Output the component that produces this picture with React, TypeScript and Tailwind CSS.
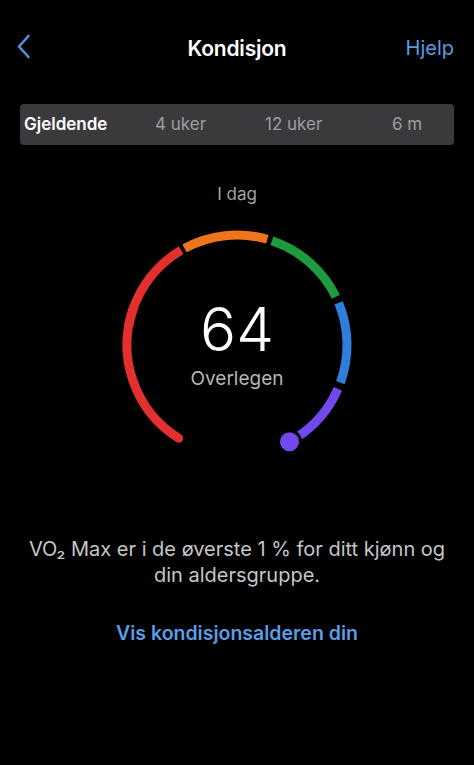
import React from 'react';

const CX = 125;
const CY = 125;
const R = 110;

// angles are degrees, clockwise from +x (screen coords)
const pt = (a: number) => {
    const rad = (a * Math.PI) / 180;
    return [CX + R * Math.cos(rad), CY + R * Math.sin(rad)];
};

const arc = (a1: number, a2: number) => {
    const [x1, y1] = pt(a1);
    const [x2, y2] = pt(a2);
    const large = a2 - a1 > 180 ? 1 : 0;
    return `M ${x1.toFixed(2)} ${y1.toFixed(2)} A ${R} ${R} 0 ${large} 1 ${x2.toFixed(2)} ${y2.toFixed(2)}`;
};

const SEGMENTS = [
    { from: 190, to: 239.5, color: '#e3302e' },
    { from: 241.5, to: 286, color: '#ee751c' },
    { from: 288.5, to: 334, color: '#1e9b3e' },
    { from: 337.5, to: 380, color: '#2e7fdc' },
    { from: 383.5, to: 418, color: '#7349ef' },
];

const TABS = ['Gjeldende', '4 uker', '12 uker', '6 m'];

const Gauge: React.FC = () => {
    const [dx, dy] = pt(61.5);
    return (
        <svg width="250" height="250" viewBox="0 0 250 250">
            <path d={arc(122, 200)} stroke="#e3302e" strokeWidth="9" fill="none" strokeLinecap="round" />
            {SEGMENTS.map((s, i) => (
                <path key={i} d={arc(s.from, s.to)} stroke={s.color} strokeWidth="9" fill="none" />
            ))}
            <circle cx={dx} cy={dy} r="11" fill="#7349ef" stroke="#000" strokeWidth="3" />
        </svg>
    );
};

const App: React.FC = () => {
    return (
        <div className="w-[474px] h-[765px] bg-black text-white overflow-hidden" style={{ fontFamily: 'Inter, "Liberation Sans", sans-serif' }}>
            {/* Nav bar */}
            <div className="relative h-[40px] mt-[28px] flex items-center justify-center">
                <svg className="absolute left-[12px] top-[4px]" width="24" height="30" viewBox="0 0 24 30">
                    <path d="M16.5 4 L7 14.5 L16.5 25" stroke="#4f93e0" strokeWidth="2.6" fill="none" strokeLinecap="round" strokeLinejoin="round" />
                </svg>
                <span className="text-[21px] font-semibold tracking-[-0.2px] mt-[2px]">Kondisjon</span>
                <span className="absolute right-[20px] top-[5px] text-[20px] text-[#5b9ae2]">Hjelp</span>
            </div>

            {/* Segmented control */}
            <div className="mx-[20px] mt-[36px] h-[41px] rounded-[4px] bg-[#3a3a3c] flex items-center text-[17px]">
                <span className="w-[118px] pl-[4px] font-semibold text-white">{TABS[0]}</span>
                <span className="w-[110px] pl-[17px] text-[#9d9d9f]">{TABS[1]}</span>
                <span className="w-[127px] pl-[17px] text-[#9d9d9f]">{TABS[2]}</span>
                <span className="pl-[17px] text-[#9d9d9f]">{TABS[3]}</span>
            </div>

            {/* Gauge */}
            <div className="mt-[37px] flex flex-col items-center">
                <span className="text-[17px] text-[#a3a3a5] leading-[24px]">I dag</span>
                <div className="relative mt-[14px]">
                    <Gauge />
                    <div className="absolute inset-0 flex flex-col items-center pt-[74px]">
                        <span className="text-[60px] font-light leading-[70px]">64</span>
                        <span className="text-[19px] text-[#b5b5b7] leading-[24px] mt-[3px]">Overlegen</span>
                    </div>
                </div>
            </div>

            {/* Description */}
            <p className="mt-[66px] px-[20px] text-center text-[20px] leading-[26px] text-[#c6c6c8]">
                VO₂ Max er i de øverste 1 % for ditt kjønn og din aldersgruppe.
            </p>
            <p className="mt-[31px] text-center text-[19.5px] font-semibold text-[#5a9de6]">Vis kondisjonsalderen din</p>
        </div>
    );
};

export default App;
